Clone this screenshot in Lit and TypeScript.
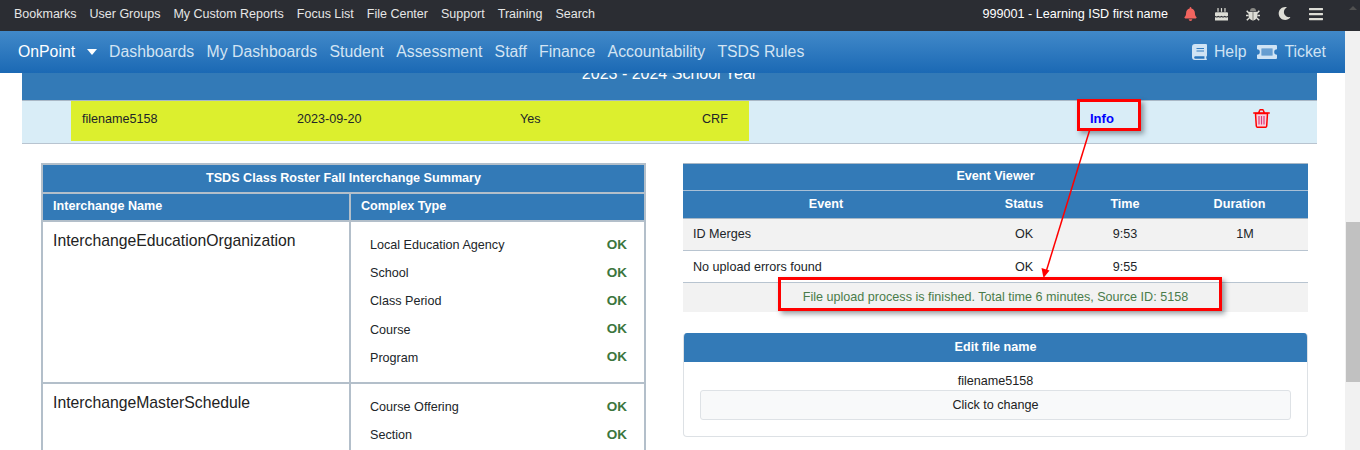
import { LitElement, html, css, svg } from "lit";
import { customElement } from "lit/decorators.js";

const topLinks = ["Bookmarks", "User Groups", "My Custom Reports", "Focus List", "File Center", "Support", "Training", "Search"];
const navLinks = ["Dashboards", "My Dashboards", "Student", "Assessment", "Staff", "Finance", "Accountability", "TSDS Rules"];
const groups = [
  { name: "InterchangeEducationOrganization", items: ["Local Education Agency", "School", "Class Period", "Course", "Program"] },
  { name: "InterchangeMasterSchedule", items: ["Course Offering", "Section"] },
];

const bell = svg`<svg class="ic bell" viewBox="0 0 448 512" width="13" height="14"><path fill="currentColor" d="M224 512c35.32 0 63.97-28.65 63.97-64H160.03c0 35.35 28.65 64 63.97 64zm215.39-149.71c-19.32-20.76-55.47-51.99-55.47-154.29 0-77.7-54.48-139.9-127.94-155.16V32c0-17.67-14.32-32-31.98-32s-31.98 14.33-31.98 32v20.84C118.56 68.1 64.08 130.3 64.08 208c0 102.3-36.15 133.53-55.47 154.29-6 6.45-8.66 14.16-8.61 21.71.11 16.4 12.98 32 32.1 32h383.8c19.12 0 32-15.6 32.1-32 .05-7.55-2.61-15.27-8.61-21.71z"/></svg>`;
const cake = svg`<svg class="ic" viewBox="0 0 14 14" width="13" height="14"><g fill="currentColor"><rect x="2.6" y="0.6" width="1.3" height="4"/><rect x="6.35" y="0.6" width="1.3" height="4"/><rect x="10.1" y="0.6" width="1.3" height="4"/><path d="M1 5.2h12a1 1 0 0 1 1 1V9c-1.2 1-2.2 1-3.5 0-1 1-2.5 1-3.5 0-1 1-2.5 1-3.5 0C2.2 10 1.2 10 0 9V6.200a1 1 0 0 1 1-1z"/><path d="M0 10.300c1.200.8 2.300.8 3.500 0 1 .8 2.500.8 3.500 0 1 .8 2.500.8 3.500 0 1.200.8 2.300.8 3.500 0V14H0z"/></g></svg>`;
const bug = svg`<svg class="ic" viewBox="0 0 14 14" width="14" height="14"><path d="M4 4a3 3 0 0 1 6 0z" fill="#8a8a86"/><path d="M3.600 4.800h6.800a1 1 0 0 1 1 1V9a4.400 4.400 0 0 1-8.800 0V5.800a1 1 0 0 1 1-1z" fill="currentColor"/><path d="M7 5v8.400" stroke="#8a8a86" stroke-width="1.100"/><path d="M3 6.300 .7 3.800M11 6.300l2.300-2.500M2.600 8.500H0M11.400 8.500H14M3.200 11 .8 13.300M10.800 11l2.400 2.300" stroke="currentColor" stroke-width="1.500" fill="none"/></svg>`;
const moon = svg`<svg class="ic" viewBox="0 0 512 512" width="13" height="13"><path fill="currentColor" d="M283.211 512c78.962 0 151.079-35.925 198.857-94.792 7.068-8.708-.639-21.43-11.562-19.35-124.203 23.654-238.262-71.576-238.262-196.954 0-72.222 38.662-138.635 101.498-174.394 9.686-5.512 7.25-20.197-3.756-22.23A258.156 258.156 0 0 0 283.211 0c-141.309 0-256 114.511-256 256 0 141.309 114.511 256 256 256z"/></svg>`;
const bars = svg`<svg class="ic" viewBox="0 0 448 512" width="14" height="16"><path fill="currentColor" d="M16 132h416c8.837 0 16-7.163 16-16V76c0-8.837-7.163-16-16-16H16C7.163 60 0 67.163 0 76v40c0 8.837 7.163 16 16 16zm0 160h416c8.837 0 16-7.163 16-16v-40c0-8.837-7.163-16-16-16H16c-8.837 0-16 7.163-16 16v40c0 8.837 7.163 16 16 16zm0 160h416c8.837 0 16-7.163 16-16v-40c0-8.837-7.163-16-16-16H16c-8.837 0-16 7.163-16 16v40c0 8.837 7.163 16 16 16z"/></svg>`;
const book = svg`<svg viewBox="0 0 15 16" width="15" height="16"><path fill="currentColor" fill-rule="evenodd" d="M3 0h11a1 1 0 0 1 1 1v10.500a1 1 0 0 1-.6.9c-.2.700-.2 1.500 0 2.200.4.200.6.500.6.900a.6.600 0 0 1-.6.500H3a3 3 0 0 1-3-3V3a3 3 0 0 1 3-3zm1.500 4v1h7.500V4zm0 2.500v1h7.500v-1zM3 12.300a1.350 1.350 0 0 0 0 2.500h9.500c-.1-.8-.1-1.700 0-2.500z"/></svg>`;
const ticket = svg`<svg viewBox="0 0 20 14" width="20" height="14"><path fill="currentColor" fill-rule="evenodd" d="M1 0h18a1 1 0 0 1 1 1v3.200a2.800 2.800 0 0 0 0 5.600V13a1 1 0 0 1-1 1H1a1 1 0 0 1-1-1V9.800a2.800 2.800 0 0 0 0-5.600V1a1 1 0 0 1 1-1zm3.500 3.500v7h11v-7z"/><rect x="4.500" y="3.500" width="11" height="7" fill="currentColor" opacity=".35"/></svg>`;
const trash = svg`<svg viewBox="0 0 17 19" width="17" height="19"><path d="M2.500 4.500h12l-.8 12.500a1.400 1.400 0 0 1-1.400 1.300H4.700A1.400 1.400 0 0 1 3.300 17z" fill="#f6d3df" stroke="#f00" stroke-width="1.500"/><path d="M.7 4h15.600M5.700 3.700l.9-2.300a1 1 0 0 1 .9-.7h2a1 1 0 0 1 .9.700l.9 2.300" fill="none" stroke="#f00" stroke-width="1.500" stroke-linecap="round"/><path d="M6 7v8.500M8.500 7v8.500M11 7v8.500" stroke="#e2397a" stroke-width="1.200"/></svg>`;

@customElement("app-root")
export class AppRoot extends LitElement {
  static styles = css`
    :host { display: block; position: relative; height: 450px; overflow: hidden; background: #fff; font-family: "Liberation Sans", Arial, sans-serif; font-size: 12.6px; color: #212529; }
    .top { position: relative; z-index: 2; height: 31px; box-sizing: border-box; background: #2b2d33; color: #fff; display: flex; align-items: center; padding: 0 28px 4px 14px; font-size: 12.5px; }
    .top-links { display: flex; gap: 13px; color: #e6e6e6; }
    .user { margin-left: auto; font-size: 12.6px; color: #fff; white-space: nowrap; }
    .icons { display: flex; align-items: center; margin-left: 6.500px; color: #ddddd6; }
    .ic { display: block; }
    .icons .i { width: 31.5px; display: flex; justify-content: center; }
    .icons .i:first-child { color: #f2645f; }
    .nav { position: relative; z-index: 2; height: 42px; margin-right: 15px; background: linear-gradient(#4189c9, #1b69b4); display: flex; align-items: center; padding: 0 19px 0 18px; font-size: 15.8px; color: #d3e4f3; }
    .brand { color: #fff; display: flex; align-items: center; margin-right: 12px; }
    .caret { width: 0; height: 0; border: 5.500px solid transparent; border-top: 6px solid #fff; border-bottom: 0; margin-left: 12px; }
    .nav-links { display: flex; gap: 12.300px; }
    .nav-right { margin-left: auto; display: flex; align-items: center; color: #cfe3f4; }
    .nav-right svg { display: block; margin-right: 7px; }
    .nav-right span + svg { margin-left: 11px; }
    .page { margin-top: -14px; padding-left: 22px; width: 1295px; position: relative; }
    .year { background: #337ab7; color: #fff; font-size: 16px; text-align: center; line-height: 30px; height: 41px; }
    .file-row { background: #d9edf7; border-top: 1px solid #a9b8c6; border-bottom: 1px solid #b8c4d0; padding-left: 49px; display: flex; position: relative; height: 42px; }
    .yellow { width: 678px; height: 40px; background: #dcef2e; display: grid; grid-template-columns: 215px 223px 182px auto; align-items: center; padding: 0 0 4px 11px; box-sizing: border-box; }
    .info { position: absolute; left: 1068px; top: -1px; line-height: 38px; color: #00f; font-weight: 700; font-size: 13px; }
    .del { position: absolute; left: 1231px; top: 8px; }
    .cols { display: flex; align-items: flex-start; padding: 19px 0 0 19px; }
    .summary { width: 605px; flex: none; box-sizing: border-box; border: 2px solid #b3bfca; border-bottom: 0; background: #b3bfca; display: grid; grid-template-columns: 306px 293px; gap: 2px; }
    .h { background: #337ab7; color: #fff; font-weight: 700; line-height: 24px; height: 26px; padding-left: 10px; }
    .title { grid-column: 1 / 3; text-align: center; padding: 0; line-height: 27px; height: 27px; }
    .name { background: #fff; font-size: 15.750px; padding: 9px 0 0 10px; line-height: 20px; color: #222; }
    .list { background: #fff; padding: 9px 17px 10px 19px; }
    .li { display: flex; justify-content: space-between; height: 28.200px; align-items: center; }
    .ok { color: #3c763d; font-weight: 700; font-size: 13.500px; padding-bottom: 2px; }
    .side { margin-left: 37px; width: 625px; flex: none; }
    .ev { display: grid; grid-template-columns: 286px 110px 92px 137px; }
    .ev > div { text-align: center; }
    .ev-title { grid-column: 1 / 5; background: #337ab7; color: #fff; font-weight: 700; height: 26px; line-height: 24px; border-top: 1px solid #a9b8c6; border-bottom: 1px solid #a9c0d6; }
    .ev .eh { background: #337ab7; color: #fff; font-weight: 700; height: 27px; line-height: 26px; border-bottom: 1px solid #a9b8c6; }
    .ev .c { height: 32px; box-sizing: border-box; line-height: 30px; border-bottom: 1px solid #b8c4d0; }
    .ev .c2 { line-height: 31px; padding-top: 1px; }
    .ev .alt { background: #f2f2f2; }
    .ev .l { text-align: left; padding-left: 10px; }
    .ev .d { padding-left: 11px; }
    .ev .done { grid-column: 1 / 5; background: #f2f2f2; color: #4a7c4a; height: 29px; line-height: 29px; }
    .card { margin: 21px 0 0 0; border: 1px solid #dde1e5; border-top: 0; border-radius: 4px; height: 104px; box-sizing: border-box; overflow: hidden; text-align: center; }
    .card-h { background: #337ab7; color: #fff; font-weight: 700; height: 29px; line-height: 28px; }
    .card-n { margin-top: 11px; line-height: 17px; color: #222; }
    .btn { margin: 0 16px; height: 30px; line-height: 28px; box-sizing: border-box; background: #f8f9fa; border: 1px solid #dee2e6; border-radius: 3px; color: #222; }
    .red { position: absolute; z-index: 3; box-sizing: border-box; border: 3px solid #f00; box-shadow: 3px 3px 5px rgba(40, 50, 60, .45); }
    .r1 { left: 1077px; top: 99px; width: 64px; height: 32px; }
    .r2 { left: 778px; top: 277px; width: 444px; height: 34px; }
    .arrow { position: absolute; z-index: 3; left: 0; top: 0; pointer-events: none; }
    .sb { position: absolute; right: 0; top: 0; width: 15px; height: 450px; background: #f1f1f1; z-index: 1; }
    .sb i { position: absolute; left: 1px; right: 0; top: 222px; height: 160px; background: #c1c1c1; }
    .up { position: absolute; right: 3px; top: 6px; z-index: 4; width: 0; height: 0; border: 4px solid transparent; border-bottom: 4px solid #505050; border-top: 0; }
  `;

  render() {
    return html`
      <div class="sb"><i></i></div>
      <div class="top">
        <div class="top-links">${topLinks.map((t) => html`<span>${t}</span>`)}</div>
        <span class="user">999001 - Learning ISD first name</span>
        <div class="icons">
          <span class="i">${bell}</span><span class="i">${cake}</span><span class="i">${bug}</span><span class="i">${moon}</span><span class="i">${bars}</span>
        </div>
      </div>
      <span class="up"></span>
      <div class="nav">
        <span class="brand">OnPoint<span class="caret"></span></span>
        <div class="nav-links">${navLinks.map((t) => html`<span>${t}</span>`)}</div>
        <div class="nav-right">${book}<span>Help</span>${ticket}<span>Ticket</span></div>
      </div>
      <div class="page">
        <div class="year">2023 - 2024 School Year</div>
        <div class="file-row">
          <div class="yellow"><span>filename5158</span><span>2023-09-20</span><span>Yes</span><span>CRF</span></div>
          <span class="info">Info</span>
          <span class="del">${trash}</span>
        </div>
        <div class="cols">
          <div class="summary">
            <div class="h title">TSDS Class Roster Fall Interchange Summary</div>
            <div class="h">Interchange Name</div>
            <div class="h">Complex Type</div>
            ${groups.map((g) => html`
              <div class="name">${g.name}</div>
              <div class="list">${g.items.map((i) => html`<div class="li"><span>${i}</span><span class="ok">OK</span></div>`)}</div>
            `)}
          </div>
          <div class="side">
            <div class="ev">
              <div class="ev-title">Event Viewer</div>
              <div class="eh">Event</div><div class="eh">Status</div><div class="eh">Time</div><div class="eh">Duration</div>
              <div class="c alt l">ID Merges</div><div class="c alt">OK</div><div class="c alt">9:53</div><div class="c alt d">1M</div>
              <div class="c c2 l">No upload errors found</div><div class="c c2">OK</div><div class="c c2">9:55</div><div class="c c2"></div>
              <div class="done">File upload process is finished. Total time 6 minutes, Source ID: 5158</div>
            </div>
            <div class="card">
              <div class="card-h">Edit file name</div>
              <div class="card-n">filename5158</div>
              <div class="btn">Click to change</div>
            </div>
          </div>
        </div>
      </div>
      <div class="red r1"></div>
      <div class="red r2"></div>
      <svg class="arrow" width="1360" height="450">
        <line x1="1090" y1="129" x2="1046" y2="272" stroke="#f00" stroke-width="1.500"/>
        <path d="M1043.500 278 L1041.500 268 L1049.500 270.500 Z" fill="#f00"/>
      </svg>
    `;
  }
}
